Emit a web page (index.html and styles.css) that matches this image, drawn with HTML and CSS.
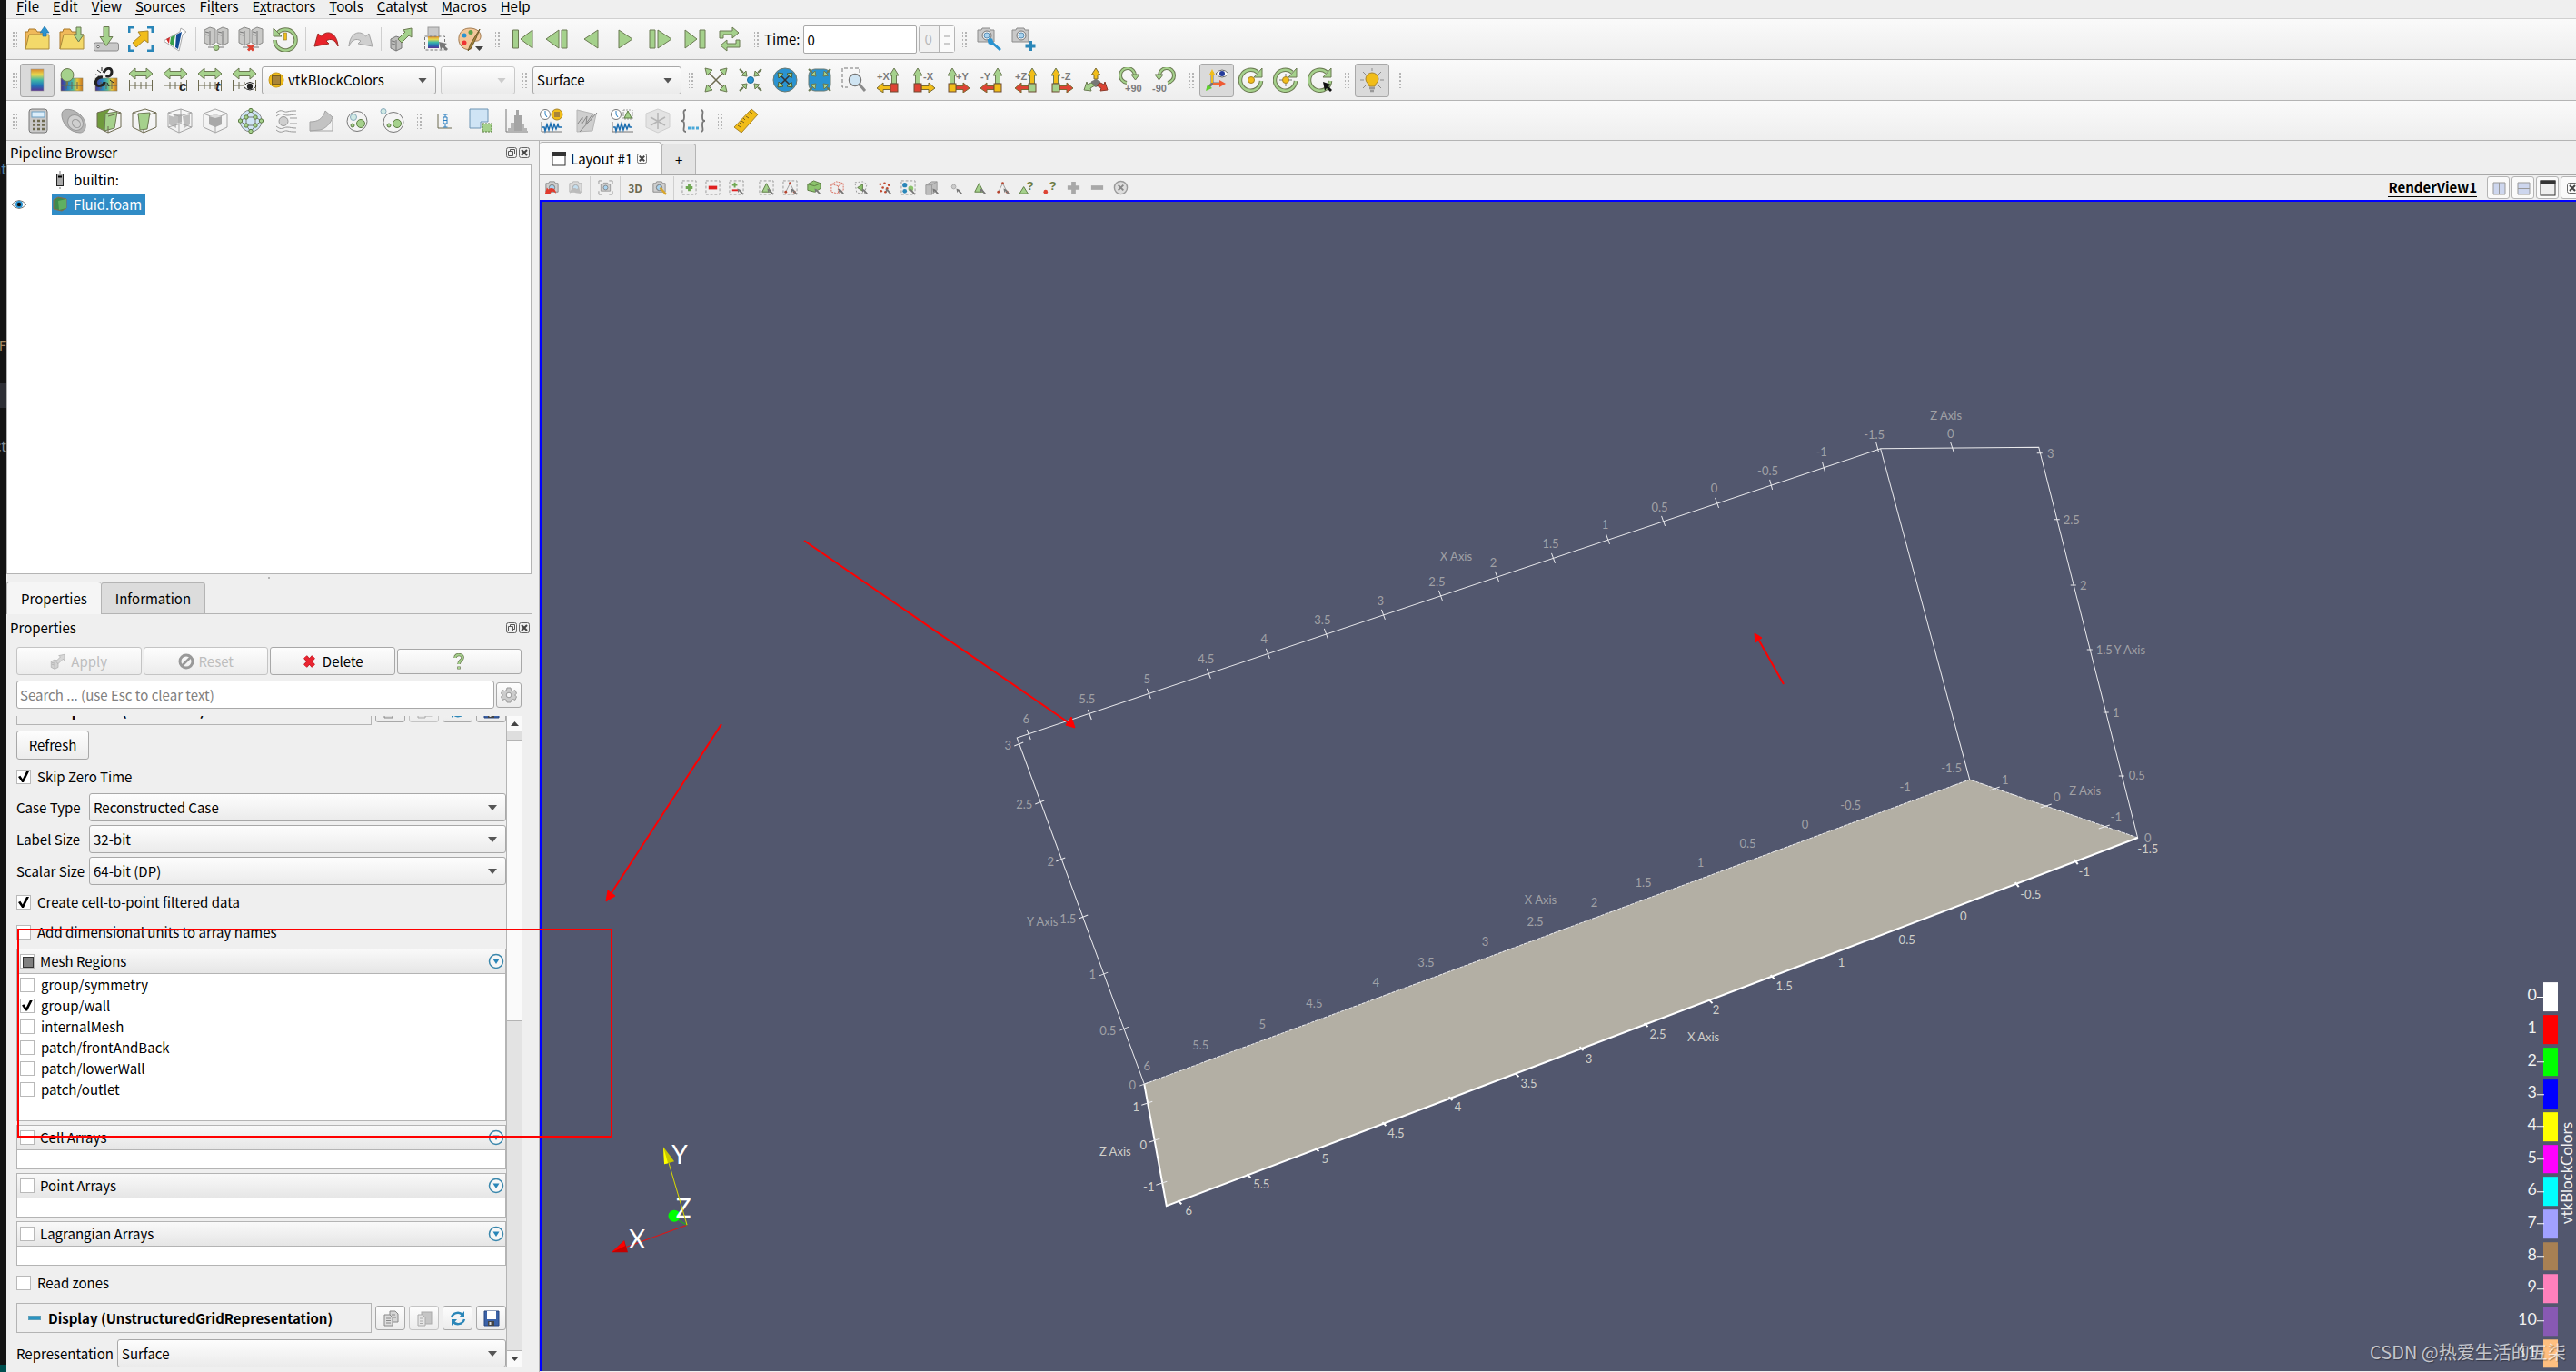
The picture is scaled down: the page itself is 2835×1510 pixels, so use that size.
FILE: index.html
```html
<!DOCTYPE html>
<html lang="en">
<head>
<meta charset="utf-8">
<title>ParaView</title>
<meta name="viewport" content="width=device-width, initial-scale=1">
<link rel="stylesheet" href="styles.css">
</head>
<body>
<svg class="sprite" aria-hidden="true">
  <defs>
    <linearGradient id="vir" x1="0" y1="0" x2="0" y2="1"><stop offset="0" stop-color="#d9882c"/><stop offset=".25" stop-color="#e8d84f"/><stop offset=".5" stop-color="#3fb8a6"/><stop offset=".75" stop-color="#2173b8"/><stop offset="1" stop-color="#5b3192"/></linearGradient>
    <linearGradient id="virh" x1="0" y1="0" x2="1" y2="0"><stop offset="0" stop-color="#4a2d8f"/><stop offset=".3" stop-color="#2a7fc0"/><stop offset=".55" stop-color="#4db89c"/><stop offset=".75" stop-color="#e8c63c"/><stop offset="1" stop-color="#c8741e"/></linearGradient>
  </defs>
  <symbol id="folder" viewBox="0 0 28 28"><path d="M1 25V6h3l1-3h7l2 3h7v5" fill="#f0b95a" stroke="#a8782a"/><path d="M5 9h22v16H1z" fill="#f3d96a" stroke="#a8893a"/></symbol>
  <symbol id="open" viewBox="0 0 28 28"><use href="#folder"/><path d="M22 0l5 7h-3v4h-4V7h-3z" fill="#2a93d1" stroke="#1b6d9e" stroke-width=".6"/></symbol>
  <symbol id="openin" viewBox="0 0 28 28"><use href="#folder"/><path d="M19 1h5v8h3l-5.500 8L16 9h3z" fill="#a5d18c" stroke="#6b7a52"/></symbol>
  <symbol id="save" viewBox="0 0 28 28"><rect x=".5" y="18" width="27" height="9" rx="2" fill="#c9c9c9" stroke="#8b8b8b"/><circle cx="5" cy="22.500" r="1.300" fill="#fff" stroke="#666"/><path d="M11 .5h6v11h4l-7 10-7-10h4z" fill="#a5d18c" stroke="#6b7a52"/></symbol>
  <symbol id="extent" viewBox="0 0 28 28"><path d="M1 7V1h6M21 1h6v6M27 21v6h-6M7 27H1v-6" fill="none" stroke="#2a86b8" stroke-width="3"/><path d="M22 5v13l-4-3-9 8-4-5 9-8-3-4z" fill="#f1bd19" stroke="#a8842a"/></symbol>
  <symbol id="flask" viewBox="0 0 28 28"><path d="M20 2l6 4-4 3-4 18L1 16 19 6z" fill="#fff" stroke="#a9a9a9"/><path d="M4 14l4-2-1 7z" fill="#d12a2a"/><path d="M9 12l5-3-2 13-4-3z" fill="#3aa04a"/><path d="M15 9l6-3-4 19-3-2z" fill="#104a94"/></symbol>
  <symbol id="servers" viewBox="0 0 28 28"><g fill="#c9c9c7" stroke="#8a8a88"><path d="M1 4l6-3 6 2v15l-6 3-6-3z"/><path d="M15 4l6-3 6 2v15l-6 3-6-3z"/></g><path d="M2 6l4 1M2 9l4 1M16 6l4 1M16 9l4 1M7 5v15M21 5v15M5 23h18" stroke="#777" fill="none"/></symbol>
  <symbol id="connect" viewBox="0 0 28 28"><use href="#servers"/><circle cx="14" cy="23.500" r="3" fill="#a5d18c" stroke="#6b7a52"/></symbol>
  <symbol id="disconnect" viewBox="0 0 28 28"><use href="#servers"/><path d="M11 20.500l6 6M17 20.500l-6 6" stroke="#dd4333" stroke-width="3"/></symbol>
  <symbol id="clock" viewBox="0 0 28 28"><path d="M4.500 8.500A11.500 11.500 0 1 1 2.500 15" fill="none" stroke="#6b7a52" stroke-width="4.500"/><path d="M4.500 8.500A11.500 11.500 0 1 1 2.500 15" fill="none" stroke="#a5d18c" stroke-width="2.500"/><path d="M1 2v9h9z" fill="#a5d18c" stroke="#6b7a52"/><rect x="12.500" y="7" width="3" height="8" fill="#f1bd19" stroke="#8a7a2a" stroke-width=".6"/></symbol>
  <symbol id="undo" viewBox="0 0 28 28"><path d="M1 22l4-14 3.500 3C15 3 26 7 27 22c-3-8-9-9-13-6l3 3z" fill="#e8222a" stroke="#9c2a24"/></symbol>
  <symbol id="redo" viewBox="0 0 28 28"><path d="M27 22L23 8l-3.500 3C13 3 2 7 1 22c3-8 9-9 13-6l-3 3z" fill="#cfcfcf" stroke="#a5a5a5"/></symbol>
  <symbol id="apply" viewBox="0 0 28 28"><path d="M2 14l6-3 6 2v11l-6 3-6-3z" fill="#bdbdbb" stroke="#777"/><path d="M8 15v12M3 16l4 1M3 19l4 1" stroke="#777"/><path d="M25 2v10l-3-2-8 8-4-4 8-8-3-2z" fill="#a5d18c" stroke="#6b7a52"/></symbol>
  <symbol id="cmapsel" viewBox="0 0 28 28"><rect x="5" y="1" width="12" height="11" fill="#c9c9c9" stroke="#999"/><rect x="5" y="11" width="12" height="13" fill="url(#vir)"/><rect x="1.500" y="11" width="22" height="15" fill="none" stroke="#777" stroke-dasharray="3 2"/><path d="M17 17l9 2-3 2 4 4-2 2-4-4-2 3z" fill="#777"/></symbol>
  <symbol id="palette" viewBox="0 0 28 28"><path d="M13 2C4 2 0 9 1 16s8 11 13 9c4-2-1-5 2-8 3-2 8 1 9-5C26 6 20 2 13 2z" fill="#f2c79a" stroke="#a47d52"/><circle cx="7" cy="10" r="2.500" fill="#2a93d1"/><circle cx="14" cy="6.500" r="2.500" fill="#5aa04a"/><circle cx="7" cy="18" r="2.500" fill="#e33"/><path d="M24 3l-4 10-5 10-4 4 3-8 5-8z" fill="#a8843a" stroke="#6b5a2a"/></symbol>
  <symbol id="caret" viewBox="0 0 28 28"><path d="M19 22h9l-4.500 5z" fill="#444"/></symbol>
  <symbol id="first" viewBox="0 0 28 28"><path d="M3.500 4h6v20h-6zM25 4v20L12 14z" fill="#a5d18c" stroke="#6b7a52"/></symbol>
  <symbol id="prev" viewBox="0 0 28 28"><path d="M19 4h6v20h-6zM16 4v20L2 14z" fill="#a5d18c" stroke="#6b7a52"/></symbol>
  <symbol id="back" viewBox="0 0 28 28"><path d="M21 4v20L6 14z" fill="#a5d18c" stroke="#6b7a52"/></symbol>
  <symbol id="play" viewBox="0 0 28 28"><path d="M6 4v20l15-10z" fill="#a5d18c" stroke="#6b7a52"/></symbol>
  <symbol id="next" viewBox="0 0 28 28"><path d="M2 4h6v20H2zM11 4v20l15-10z" fill="#a5d18c" stroke="#6b7a52"/></symbol>
  <symbol id="last" viewBox="0 0 28 28"><path d="M19 4h6v20h-6zM3 4v20l13-10z" fill="#a5d18c" stroke="#6b7a52"/></symbol>
  <symbol id="loop" viewBox="0 0 28 28"><path d="M3 13V5h14V1l7 6-7 6V9H7v4zM25 15v8H11v4l-7-6 7-6v4h10v-4z" fill="#a5d18c" stroke="#6b7a52"/></symbol>
  <symbol id="cam" viewBox="0 0 28 28"><path d="M1 4h4l1-2h8l1 2h4v13H1z" fill="#c9c9c9" stroke="#8b8b8b"/><circle cx="11" cy="10" r="5" fill="#eee" stroke="#777"/><circle cx="11" cy="10" r="3" fill="#a9d3ef" stroke="#5b8fb5"/></symbol>
  <symbol id="camwrench" viewBox="0 0 28 28"><use href="#cam"/><path d="M13 14l3 1 1 3 9 8M13 14l1 4 4 1" stroke="#2a93d1" stroke-width="3" fill="none"/></symbol>
  <symbol id="camplus" viewBox="0 0 28 28"><use href="#cam"/><path d="M21 16v11M15.500 21.500h11" stroke="#2a86b8" stroke-width="4" fill="none"/></symbol>
  <symbol id="colorbar" viewBox="0 0 28 28"><rect x="7" y="2" width="14" height="24" fill="url(#vir)" stroke="#999" stroke-width=".6"/></symbol>
  <symbol id="mapbar" viewBox="0 0 28 28"><rect x="2" y="12" width="24" height="14" fill="url(#virh)" stroke="#886" stroke-width=".6"/><path d="M2 20h24M8 16v8M14 16v8M20 16v8" stroke="#665" fill="none"/></symbol>
  <symbol id="editmap" viewBox="0 0 28 28"><use href="#mapbar"/><path d="M9 16v4" stroke="#6b7a52" stroke-width="2"/><circle cx="9" cy="8.500" r="7" fill="#a5d18c" stroke="#6b7a52"/></symbol>
  <symbol id="sepmap" viewBox="0 0 28 28"><use href="#mapbar"/><path d="M11 6c3-6 9-6 9-1s-5 6-6 4M10 11c-6-1-9 5-7 8s9 1 9-3" fill="none" stroke="#222" stroke-width="3"/><path d="M2 8l4 1M4 3l4 3M9 0v4M18 14l4 3M15 17l2 4" stroke="#222"/></symbol>
  <symbol id="resc" viewBox="0 0 28 28"><path d="M1 7l7-6v3.500h12V1l7 6-7 6V9.500H8V13z" fill="#a5d18c" stroke="#6b7a52"/><path d="M1 20h26M1.500 14v12M8 16v8M14 16v8M20 16v8M26.500 14v12" stroke="#6d6a50" fill="none"/></symbol>
  <symbol id="eyes" viewBox="0 0 18 12"><path d="M1 6q8-9 16 0-8 9-16 0z" fill="#fff" stroke="#777"/><circle cx="9" cy="6" r="4" fill="#2a93d1"/><circle cx="9" cy="6" r="2.200" fill="#111"/></symbol>
  <symbol id="resv" viewBox="0 0 28 28"><use href="#resc"/><path d="M13 21q7-9 14 0-7 8-14 0z" fill="#fff" stroke="#222"/><circle cx="20" cy="21" r="3.200" fill="#222"/></symbol>
  <symbol id="fit" viewBox="0 0 28 28"><path d="M4 4l20 20M24 4L4 24" stroke="#6d6a50" stroke-width="1.500"/><path d="M2 1l8 2-6 6zM26 1l-8 2 6 6zM2 27l8-2-6-6zM26 27l-8-2 6-6z" fill="#a5d18c" stroke="#6b7a52"/></symbol>
  <symbol id="tips" viewBox="0 0 28 28"><path d="M10 10L4 9l5-5zM18 10l6-1-5-5zM10 18l-6 1 5 5zM18 18l6 1-5 5z" fill="#a5d18c" stroke="#6b7a52"/><path d="M6 6L2 2M22 6l4-4M6 22l-4 4M22 22l4 4" stroke="#6b7a52" stroke-width="2"/></symbol>
  <symbol id="zoomd" viewBox="0 0 28 28"><use href="#tips"/><circle cx="14" cy="14" r="3.500" fill="#2a93d1" stroke="#1b6d9e"/></symbol>
  <symbol id="zball" viewBox="0 0 28 28"><circle cx="14" cy="14" r="13" fill="#2a93d1" stroke="#6b7a72"/><path d="M8 8l12 12M20 8L8 20" stroke="#333" stroke-width="1.500"/><path d="M6 6l6 1-5 5zM22 6l-6 1 5 5zM6 22l6-1-5-5zM22 22l-6-1 5-5z" fill="#a5d18c" stroke="#4b5a32"/></symbol>
  <symbol id="zbox" viewBox="0 0 28 28"><rect x="2" y="2" width="24" height="24" rx="7" fill="#2a93d1" stroke="#6b7a72"/><use href="#tips"/></symbol>
  <symbol id="zrub" viewBox="0 0 28 28"><path d="M20 6V1H1v21h6" fill="none" stroke="#777" stroke-dasharray="4 2"/><path d="M20 19l6 7" stroke="#8b8b8b" stroke-width="3"/><circle cx="15" cy="14" r="6.500" fill="#cfe4f2" stroke="#777" stroke-width="1.500"/></symbol>
  <symbol id="axr" viewBox="0 0 28 28"><path d="M17.500 18V9H15l5-8 5 8h-2.500v9z" fill="var(--v,#a5d18c)" stroke="#6b7a52"/><path d="M16 20.500H8V17l-7 6 7 5v-3.500h8z" fill="var(--h,#f1bd19)" stroke="#7a6a32"/><rect x="16" y="18" width="8" height="9" fill="var(--c,#dd4333)" stroke="#6d4a32"/></symbol>
  <symbol id="axl" viewBox="0 0 28 28"><path d="M5.500 18V9H3l5-8 5 8h-2.500v9z" fill="var(--v,#a5d18c)" stroke="#6b7a52"/><path d="M12 20.500h8V17l7 6-7 5v-3.500h-8z" fill="var(--h,#f1bd19)" stroke="#7a6a32"/><rect x="4" y="18" width="8" height="9" fill="var(--c,#dd4333)" stroke="#6d4a32"/></symbol>
  <symbol id="iso" viewBox="0 0 28 28"><path d="M14 13l5 2.500v4L14 22l-5-2.500v-4z" fill="#777"/><path d="M12 13V8H9.500L14 1l4.500 7H16v5z" fill="#f1bd19" stroke="#7a6a32"/><path d="M9 17l-4 2-1-3-3 9 8 1-1-3 5-3z" fill="#a5d18c" stroke="#6b7a52"/><path d="M19 17l4 2 1-3 3 9-8 1 1-3-5-3z" fill="#dd4333" stroke="#8a3a2a"/></symbol>
  <symbol id="rotp" viewBox="0 0 28 28"><path d="M10 17A8 8 0 1 1 19 9" fill="none" stroke="#6b7a52" stroke-width="4"/><path d="M10 17A8 8 0 1 1 19 9" fill="none" stroke="#a5d18c" stroke-width="2"/><path d="M15 8h9l-4.500 6z" fill="#a5d18c" stroke="#6b7a52"/></symbol>
  <symbol id="rotm" viewBox="0 0 28 28"><path d="M17 17A8 8 0 1 0 8 9" fill="none" stroke="#6b7a52" stroke-width="4"/><path d="M17 17A8 8 0 1 0 8 9" fill="none" stroke="#a5d18c" stroke-width="2"/><path d="M3 8h9l-4.500 6z" fill="#a5d18c" stroke="#6b7a52"/></symbol>
  <symbol id="axes" viewBox="0 0 28 28"><path d="M9 5v13h10M9 18l-5 5" stroke="#777" stroke-width="3" fill="none"/><path d="M9 5v12" stroke="#f1bd19" stroke-width="2"/><path d="M10 18h9" stroke="#ef6a33" stroke-width="2"/><path d="M6 8l3-6 3 6z" fill="#f1bd19"/><path d="M17 14l7 4-7 4z" fill="#ef5a33"/><path d="M2 26l2-7 5 4z" fill="#5fd12f"/><path d="M13 7q7-8 14 0-7 8-14 0z" fill="#fff" stroke="#666"/><circle cx="20" cy="7" r="3" fill="#233a9a"/></symbol>
  <symbol id="ring" viewBox="0 0 28 28"><path d="M25 15A11.500 11.500 0 1 1 21 5.500" fill="none" stroke="#6b7a52" stroke-width="4.500"/><path d="M25 15A11.500 11.500 0 1 1 21 5.500" fill="none" stroke="#a5d18c" stroke-width="2.500"/><path d="M26 1v10h-9z" fill="#a5d18c" stroke="#6b7a52"/></symbol>
  <symbol id="ring1" viewBox="0 0 28 28"><use href="#ring"/><circle cx="14" cy="14" r="3.500" fill="#f1bd19" stroke="#a8842a"/></symbol>
  <symbol id="ring2" viewBox="0 0 28 28"><path d="M14 7v14M7 14h14" stroke="#777"/><use href="#ring1"/></symbol>
  <symbol id="ring3" viewBox="0 0 28 28"><use href="#ring"/><path d="M17 16l9 3-3 2 4 4-2 2-4-4-2 3z" fill="#111"/></symbol>
  <symbol id="bulb" viewBox="0 0 28 28"><path d="M14 1v3M1 14h4M23 14h4M4 5l3 3M24 5l-3 3M4 23l3-3M24 23l-3-3" stroke="#8b8b8b"/><path d="M11 21c0-3-4-4-4-8a7 7 0 0 1 14 0c0 4-4 5-4 8z" fill="#f1bd19" stroke="#a8842a"/><path d="M11 23h6M12 26h4" stroke="#999" stroke-width="2.500"/></symbol>
  <symbol id="calc" viewBox="0 0 28 28"><rect x="4" y="1" width="20" height="26" rx="3" fill="#c9c9c9" stroke="#777"/><rect x="7" y="4" width="14" height="6" fill="#dceefa" stroke="#6ca0c4"/><path d="M8 14h3M13 14h3M18 14h3M8 18.500h3M13 18.500h3M18 18.500h3M8 23h3M13 23h3M18 23h3" stroke="#6d6a50" stroke-width="2.500"/></symbol>
  <symbol id="contour" viewBox="0 0 28 28"><path d="M1 6C2-1 14 0 22 8s6 19-1 19C10 27 0 16 1 6z" fill="#b5b5b5" stroke="#999"/><ellipse cx="16" cy="16" rx="9" ry="8" transform="rotate(45 16 16)" fill="#cfcfcf" stroke="#999"/><ellipse cx="17" cy="17" rx="5" ry="4" transform="rotate(45 17 17)" fill="none" stroke="#999"/></symbol>
  <symbol id="wire" viewBox="0 0 28 28"><path d="M1 5l14-4 12 4v16l-14 6-12-6zM1 5l12 4 14-4M13 9v18M15 1v16l12 4M15 17L1 21" fill="none" stroke="var(--w,#6d6a50)"/></symbol>
  <symbol id="clip" viewBox="0 0 28 28"><path d="M1 5l14-4-4 6-1 18-9-4z" fill="#6f9a3c"/><path d="M10 6l13-2-3 18-11 3z" fill="#a5d18c" stroke="#6b7a52"/><path d="M1 5l14-4 12 4v16l-14 6-12-6z" fill="none" stroke="#6d6a50"/><path d="M13 9l14-4M13 20v7" fill="none" stroke="#6d6a50"/></symbol>
  <symbol id="slice" viewBox="0 0 28 28"><path d="M1 5l14-4 12 4v16l-14 6-12-6zM1 5l12 4 14-4M13 9v18" fill="none" stroke="#6d6a50"/><path d="M7 6l13-1-3 18-8 1z" fill="#a5d18c" stroke="#6b7a52"/></symbol>
  <symbol id="thresh" viewBox="0 0 28 28" style="--w:#a5a5a5"><path d="M2 8l6 2 0-4 8 1v8l-6 2v5l-8-4zM17 9l8-2v11l-6 4z" fill="#bdbdbd"/><use href="#wire"/></symbol>
  <symbol id="subset" viewBox="0 0 28 28"><path d="M1 6l13-5 13 5v15l-13 6-13-6zM1 6l13 5 13-5M14 19v8" fill="none" stroke="#a5a5a5"/><path d="M7 9l7-2 7 2v9l-7 3-7-3z" fill="#a8a8a8"/><path d="M7 9l7 2 7-2-7-2z" fill="#ddd"/></symbol>
  <symbol id="glyph" viewBox="0 0 28 28"><circle cx="14" cy="14" r="12" fill="#cfe4f5" stroke="#888"/><path d="M2 14l7-4h10l7 4-7 5H9zM9 10l5-8 5 8M9 19l5 7 5-7M9 10v9M19 10v9" fill="none" stroke="#777"/><g fill="#a5d18c" stroke="#5b7a42"><circle cx="14" cy="2.500" r="2.200"/><circle cx="14" cy="25.500" r="2.200"/><circle cx="2.500" cy="14" r="2.200"/><circle cx="25.500" cy="14" r="2.200"/><circle cx="9" cy="10" r="2.200"/><circle cx="19" cy="10" r="2.200"/><circle cx="9" cy="19" r="2.200"/><circle cx="19" cy="19" r="2.200"/></g></symbol>
  <symbol id="stream" viewBox="0 0 28 28"><path d="M3 5c6-5 8 0 12-1s5-1 10-1M3 9c6-5 8-1 12-1s5-1 10-1M3 20c6 5 8 1 12 1s5 1 10 1M3 24c6 5 8 0 12 1s5 1 10 1M18 11l8 0M18 17h8" fill="none" stroke="#999"/><circle cx="11" cy="14.500" r="5" fill="#cfcfcf" stroke="#999"/></symbol>
  <symbol id="warp" viewBox="0 0 28 28"><path d="M1 15c9 0 14-3 17-12l8 7c-2 7-8 13-14 14l-11 1z" fill="#c3c3c3" stroke="#a5a5a5"/><path d="M1 25h25V13" fill="none" stroke="#a5a5a5"/></symbol>
  <symbol id="group" viewBox="0 0 28 28"><circle cx="14" cy="14.500" r="11" fill="#f4f4f4" stroke="#777"/><circle cx="10" cy="10" r="3.500" fill="#cfe9e4" stroke="#8ab"/><circle cx="9" cy="19" r="2" fill="#a5d18c" stroke="#5b7a42"/><circle cx="18" cy="17" r="4.500" fill="#a5d18c" stroke="#5b7a42"/></symbol>
  <symbol id="extractb" viewBox="0 0 28 28"><circle cx="15" cy="15.500" r="11" fill="#f4f4f4" stroke="#777"/><circle cx="4" cy="3.500" r="3" fill="#cfe9e4" stroke="#8ab"/><circle cx="10" cy="19" r="2" fill="#a5d18c" stroke="#5b7a42"/><circle cx="19" cy="17" r="4.500" fill="#a5d18c" stroke="#5b7a42"/></symbol>
  <symbol id="box" viewBox="0 0 28 28"><path d="M6 6v16h15" fill="none" stroke="#6d6a50"/><path d="M14 7v3M14 17v4M11.500 7h5M11.500 21h5" stroke="#2a7fc0"/><path d="M12 10h4v7h-4zM12 13.500h4" fill="none" stroke="#2a7fc0"/></symbol>
  <symbol id="selx" viewBox="0 0 28 28"><path d="M2 1h20v14h-8v7H2z" fill="#cfe4f5" stroke="#6c94b4"/><rect x="16" y="17" width="10" height="9" fill="#a5d18c" stroke="#5b7a42" stroke-dasharray="2 1"/></symbol>
  <symbol id="hist" viewBox="0 0 28 28"><path d="M3 1v25h24" fill="none" stroke="#777"/><path d="M5 25v-3h3v3zM8 25v-9h4v9zM20 25v-8h3v8zM23 25v-3h3v3z" fill="#b5b5b5"/><path d="M12 25V8h2V2h3v6h3v17z" fill="#a5a5a5"/></symbol>
  <symbol id="wave" viewBox="0 0 28 28"><path d="M3 15v11h23" fill="none" stroke="#777"/><path d="M4 21h2l1 4 2-7 2 6 2-7 2 7 2-6 2 5 2-5 1 3h3" fill="none" stroke="#1b6db0" stroke-width="1.500"/><circle cx="7" cy="7" r="5.500" fill="#fff" stroke="#777"/><path d="M7 3v4l2 3" fill="none" stroke="#2a7fc0"/></symbol>
  <symbol id="plottime" viewBox="0 0 28 28"><use href="#wave"/><circle cx="20" cy="7" r="6" fill="#f1bd19" stroke="#a8842a"/><rect x="17" y="4" width="6" height="6" fill="#a8843a"/></symbol>
  <symbol id="plotsel" viewBox="0 0 28 28"><use href="#wave"/><rect x="15" y="2" width="10" height="10" fill="none" stroke="#999" stroke-dasharray="2 1"/><path d="M20 3l4 8h-8z" fill="#a5d18c" stroke="#5b7a42"/></symbol>
  <symbol id="plotline" viewBox="0 0 28 28"><path d="M3 2l21 5-4 18-17 1z" fill="#cfcfcf" stroke="#b5b5b5"/><path d="M6 26L25 5M4 17l5-7-1 8 6-9-1 8 7-10-1 7" fill="none" stroke="#888"/></symbol>
  <symbol id="probe" viewBox="0 0 28 28"><path d="M1 6l13-5 13 5v15l-13 6-13-6z" fill="#e3e3e3" stroke="#cfcfcf"/><path d="M14 5v18M6 10l16 9M22 10L6 19" stroke="#b5b5b5" stroke-width="1.500"/></symbol>
  <symbol id="braces" viewBox="0 0 28 28"><path d="M6 2C2 2 4 6 4 9s0 5-3 5c3 0 3 2 3 5s-2 7 2 7M22 2c4 0 2 4 2 7s0 5 3 5c-3 0-3 2-3 5s2 7-2 7" fill="none" stroke="#777" stroke-width="1.800"/><path d="M8 22h3M12.500 22h3M17 22h3" stroke="#4aa8d8" stroke-width="3"/></symbol>
  <symbol id="ruler" viewBox="0 0 28 28"><path d="M20 1l7 6L9 27l-8-6z" fill="#f1bd19" stroke="#a8842a"/><path d="M18 4l3 2M16 6l2 1M14 9l3 2M11 11l2 2M9 14l3 2M7 16l2 2M5 19l3 2" stroke="#7a5f1a"/></symbol>
  <symbol id="dashb" viewBox="0 0 18 18"><rect x="1" y="1" width="16" height="16" fill="none" stroke="#999" stroke-dasharray="3 2"/></symbol>
  <symbol id="cur" viewBox="0 0 18 18"><path d="M10 10l3 1 4 5-1.500 1L12 13l-1 2z" fill="#777"/></symbol>
  <symbol id="tri" viewBox="0 0 18 18"><path d="M9 4l5 10H4z" fill="#a5d18c" stroke="#5b7a42"/></symbol>
  <symbol id="tripts" viewBox="0 0 18 18"><path d="M9 4l5 10M9 4L4 14" fill="none" stroke="#999"/><g fill="#b5452f"><circle cx="9" cy="4" r="1.500"/><circle cx="14" cy="14" r="1.500"/><circle cx="4" cy="14" r="1.500"/></g></symbol>
  <symbol id="minicam" viewBox="0 0 18 18"><path d="M2 4h3l1-2h6l1 2h3v10H2z" fill="#cfcfcf" stroke="#8b8b8b"/><circle cx="9" cy="9" r="3.300" fill="#a9d3ef" stroke="#777"/></symbol>
  <symbol id="dockfloat" viewBox="0 0 12 12"><rect x=".5" y=".5" width="11" height="11" rx="2" fill="none" stroke="#666"/><path d="M4.500 4.500v-2h5v5h-2M2.500 4.500h5v5h-5z" fill="none" stroke="#555"/></symbol>
  <symbol id="dockclose" viewBox="0 0 12 12"><rect x=".5" y=".5" width="11" height="11" rx="2" fill="none" stroke="#666"/><path d="M3 3l6 6M9 3L3 9" stroke="#444" stroke-width="2"/></symbol>
  <symbol id="collapse" viewBox="0 0 18 18"><circle cx="9" cy="9" r="7.500" fill="#f7f7f7" stroke="#3a87ac" stroke-width="1.500"/><path d="M5.500 6.500h7L9 12z" fill="#2a86b8"/></symbol>
  <symbol id="copy" viewBox="0 0 18 18"><path d="M8 1h6l3 3v9H8z" fill="#d5d5d5" stroke="#888"/><path d="M2 5h6l3 3v9H2z" fill="#ddd" stroke="#888"/><path d="M4 9h5M4 11.500h5M4 14h5M10 5h4M12 8h3" stroke="#888"/></symbol>
  <symbol id="paste" viewBox="0 0 18 18"><rect x="6" y="2" width="11" height="13" fill="#c5c5c5" stroke="#aaa"/><path d="M2 5h5l3 3v9H2z" fill="#e5e5e5" stroke="#aaa"/><path d="M4 9h4M4 12h4M4 14.500h4" stroke="#aaa"/></symbol>
  <symbol id="reload" viewBox="0 0 18 18"><path d="M2 8a7 6.500 0 0 1 12-3M16 10a7 6.500 0 0 1-12 3" fill="none" stroke="#2a86b8" stroke-width="2.500"/><path d="M16 1v7h-6zM2 17v-7h6z" fill="#2a86b8"/></symbol>
  <symbol id="floppy" viewBox="0 0 18 18"><path d="M1 1h16v16H1z" fill="#3b62a8" stroke="#26457f"/><path d="M4 1h10v9H4z" fill="#fff"/><path d="M5 12h7v5H5z" fill="#444"/><path d="M6.500 13h2v3h-2z" fill="#ddd"/></symbol>
</svg>

<div class="app">
  <aside class="strip" aria-hidden="true"><span class="s1">nt</span><span class="s2">SF</span><span class="s3"></span><span class="s4">ct</span><span class="s5"></span></aside>
  <div class="window">
    <nav class="menubar"><a href="#"><u>F</u>ile</a><a href="#"><u>E</u>dit</a><a href="#"><u>V</u>iew</a><a href="#"><u>S</u>ources</a><a href="#">Fi<u>l</u>ters</a><a href="#">E<u>x</u>tractors</a><a href="#"><u>T</u>ools</a><a href="#"><u>C</u>atalyst</a><a href="#"><u>M</u>acros</a><a href="#"><u>H</u>elp</a></nav>

    <div class="toolbar">
      <i class="grip"></i>
      <button class="tb" aria-label="Open"><svg><use href="#open"/></svg></button><button class="tb" aria-label="Load state"><svg><use href="#openin"/></svg></button><button class="tb" aria-label="Save"><svg><use href="#save"/></svg></button><button class="tb" aria-label="Save extracts"><svg><use href="#extent"/></svg></button><button class="tb" aria-label="Catalyst"><svg><use href="#flask"/></svg></button>
      <i class="sep"></i>
      <button class="tb" aria-label="Connect"><svg><use href="#connect"/></svg></button><button class="tb" aria-label="Disconnect"><svg><use href="#disconnect"/></svg></button><button class="tb" aria-label="Reload"><svg><use href="#clock"/></svg></button>
      <i class="sep"></i>
      <button class="tb" aria-label="Undo"><svg><use href="#undo"/></svg></button><button class="tb" aria-label="Redo"><svg><use href="#redo"/></svg></button>
      <i class="sep"></i>
      <button class="tb" aria-label="Auto apply"><svg><use href="#apply"/></svg></button><button class="tb" aria-label="Find data"><svg><use href="#cmapsel"/></svg></button><button class="tb" aria-label="Palette"><svg><use href="#palette"/><use href="#caret"/></svg></button>
      <i class="grip"></i>
      <button class="tb" aria-label="First frame"><svg><use href="#first"/></svg></button><button class="tb" aria-label="Previous frame"><svg><use href="#prev"/></svg></button><button class="tb" aria-label="Reverse"><svg><use href="#back"/></svg></button><button class="tb" aria-label="Play"><svg><use href="#play"/></svg></button><button class="tb" aria-label="Next frame"><svg><use href="#next"/></svg></button><button class="tb" aria-label="Last frame"><svg><use href="#last"/></svg></button><button class="tb" aria-label="Loop"><svg><use href="#loop"/></svg></button>
      <i class="grip"></i>
      <label class="timelabel" for="time">Time:</label><input id="time" class="timebox" value="0">
      <span class="spin"><input aria-label="Time step" value="0" disabled><span class="arrows"></span></span>
      <i class="grip"></i>
      <button class="tb" aria-label="Adjust camera"><svg><use href="#camwrench"/></svg></button><button class="tb" aria-label="Add camera link"><svg><use href="#camplus"/></svg></button>
    </div>

    <div class="toolbar">
      <i class="grip"></i>
      <button class="tb on" aria-label="Color legend"><svg><use href="#colorbar"/></svg></button><button class="tb" aria-label="Edit color map"><svg><use href="#editmap"/></svg></button><button class="tb" aria-label="Separate color map"><svg><use href="#sepmap"/></svg></button><button class="tb" aria-label="Rescale"><svg><use href="#resc"/></svg></button><button class="tb" aria-label="Rescale custom"><svg viewBox="0 0 28 28"><use href="#resc"/><text class="ital" x="18" y="26">c</text></svg></button><button class="tb" aria-label="Rescale temporal"><svg viewBox="0 0 28 28"><use href="#resc"/><text class="ital" x="20" y="26">t</text></svg></button><button class="tb" aria-label="Rescale visible"><svg><use href="#resv"/></svg></button>
      <span class="combo array"><svg class="cell" viewBox="0 0 18 18"><circle cx="9" cy="9" r="8" fill="#f1bd19" stroke="#c99a18"/><rect x="4.500" y="4.500" width="9" height="9" fill="#a8843a" stroke="#7a5f1a"/></svg><select aria-label="Coloring"><option>vtkBlockColors</option></select></span>
      <span class="combo comp"><select aria-label="Component" disabled><option></option></select></span>
      <i class="grip"></i>
      <span class="combo repr"><select aria-label="Representation type"><option>Surface</option></select></span>
      <i class="grip"></i>
      <button class="tb" aria-label="Reset camera"><svg><use href="#fit"/></svg></button><button class="tb" aria-label="Zoom to data"><svg><use href="#zoomd"/></svg></button><button class="tb" aria-label="Reset closest"><svg><use href="#zball"/></svg></button><button class="tb" aria-label="Zoom closest"><svg><use href="#zbox"/></svg></button><button class="tb" aria-label="Zoom to box"><svg><use href="#zrub"/></svg></button>
      <button class="tb" aria-label="View +X"><svg viewBox="0 0 28 28"><use href="#axr"/><text class="ax" x="1" y="14">+X</text></svg></button><button class="tb" aria-label="View -X"><svg viewBox="0 0 28 28"><use href="#axl"/><text class="ax" x="14" y="14">-X</text></svg></button><button class="tb yv" aria-label="View +Y"><svg viewBox="0 0 28 28"><use href="#axl"/><text class="ax" x="12" y="14">+Y</text></svg></button><button class="tb yv" aria-label="View -Y"><svg viewBox="0 0 28 28"><use href="#axr"/><text class="ax" x="1" y="14">-Y</text></svg></button><button class="tb zv" aria-label="View +Z"><svg viewBox="0 0 28 28"><use href="#axr"/><text class="ax" x="1" y="14">+Z</text></svg></button><button class="tb zv" aria-label="View -Z"><svg viewBox="0 0 28 28"><use href="#axl"/><text class="ax" x="14" y="14">-Z</text></svg></button><button class="tb" aria-label="Isometric"><svg><use href="#iso"/></svg></button><button class="tb" aria-label="Rotate +90"><svg viewBox="0 0 28 28"><use href="#rotp"/><text class="ax" x="8" y="27">+90</text></svg></button><button class="tb" aria-label="Rotate -90"><svg viewBox="0 0 28 28"><use href="#rotm"/><text class="ax" x="0" y="27">-90</text></svg></button>
      <i class="grip"></i>
      <button class="tb on" aria-label="Show center axes"><svg><use href="#axes"/></svg></button><button class="tb" aria-label="Reset center"><svg><use href="#ring1"/></svg></button><button class="tb" aria-label="Center on data"><svg><use href="#ring2"/></svg></button><button class="tb" aria-label="Pick center"><svg><use href="#ring3"/></svg></button>
      <i class="grip"></i>
      <button class="tb on" aria-label="Light"><svg><use href="#bulb"/></svg></button>
      <i class="grip"></i>
    </div>

    <div class="toolbar filters">
      <i class="grip"></i>
      <button class="tb" aria-label="Calculator"><svg><use href="#calc"/></svg></button><button class="tb" aria-label="Contour"><svg><use href="#contour"/></svg></button><button class="tb" aria-label="Clip"><svg><use href="#clip"/></svg></button><button class="tb" aria-label="Slice"><svg><use href="#slice"/></svg></button><button class="tb" aria-label="Threshold"><svg><use href="#thresh"/></svg></button><button class="tb" aria-label="Extract subset"><svg><use href="#subset"/></svg></button><button class="tb" aria-label="Glyph"><svg><use href="#glyph"/></svg></button><button class="tb" aria-label="Stream tracer"><svg><use href="#stream"/></svg></button><button class="tb" aria-label="Warp"><svg><use href="#warp"/></svg></button><button class="tb" aria-label="Group"><svg><use href="#group"/></svg></button><button class="tb" aria-label="Extract block"><svg><use href="#extractb"/></svg></button>
      <i class="grip"></i>
      <button class="tb" aria-label="Box chart"><svg><use href="#box"/></svg></button><button class="tb" aria-label="Extract selection"><svg><use href="#selx"/></svg></button><button class="tb" aria-label="Histogram"><svg><use href="#hist"/></svg></button><button class="tb" aria-label="Plot over time"><svg><use href="#plottime"/></svg></button><button class="tb" aria-label="Plot over line"><svg><use href="#plotline"/></svg></button><button class="tb" aria-label="Plot selection"><svg><use href="#plotsel"/></svg></button><button class="tb" aria-label="Probe"><svg><use href="#probe"/></svg></button><button class="tb" aria-label="Programmable filter"><svg><use href="#braces"/></svg></button>
      <i class="grip"></i>
      <button class="tb" aria-label="Ruler"><svg><use href="#ruler"/></svg></button>
    </div>

    <div class="main">
      <div class="dock">
        <header class="docktitle"><span>Pipeline Browser</span><button aria-label="Float"><svg><use href="#dockfloat"/></svg></button><button aria-label="Close"><svg><use href="#dockclose"/></svg></button></header>
        <ul class="tree">
          <li><span class="eye"></span><span class="item"><svg class="srv" viewBox="0 0 18 20"><path d="M9 0v3M9 18v2" stroke="#777"/><rect x="5.500" y="3.500" width="7" height="13" fill="#aaa" stroke="#222"/><path d="M7 6.500h4" stroke="#000" stroke-width="2"/></svg>builtin:</span></li>
          <li><svg class="eye"><use href="#eyes"/></svg><span class="item sel"><svg viewBox="0 0 18 20"><path d="M2 5l5-3 9 2v10l-5 3-9-2z" fill="#3f8a4c" stroke="#8a6a4a"/><path d="M7 6l9-2v10l-8 2z" fill="#5fb060"/></svg>Fluid.foam</span></li>
        </ul>
        <div class="split"></div>
        <div class="tabs"><button class="tab active">Properties</button><button class="tab">Information</button></div>
        <header class="docktitle props"><span>Properties</span><button aria-label="Float"><svg><use href="#dockfloat"/></svg></button><button aria-label="Close"><svg><use href="#dockclose"/></svg></button></header>
        <div class="actions">
          <button class="btn" disabled><svg class="grey"><use href="#apply"/></svg>Apply</button>
          <button class="btn" disabled><svg viewBox="0 0 18 18"><circle cx="9" cy="9" r="7" fill="none" stroke="#999" stroke-width="3"/><path d="M4 14L14 4" stroke="#999" stroke-width="2.500"/></svg>Reset</button>
          <button class="btn"><svg viewBox="0 0 18 18"><path d="M4 4l9 10M13 4L4 14" stroke="#b02028" stroke-width="5"/><path d="M4 4l9 10M13 4L4 14" stroke="#ea2430" stroke-width="4"/></svg>Delete</button>
          <button class="btn help" aria-label="Help"><svg viewBox="0 0 18 18"><path d="M5 5c0-5 9-4 8 0 0 3-4 3-4 7M9 14.500v3" fill="none" stroke="#6b7a52" stroke-width="3.500"/><path d="M5 5c0-5 9-4 8 0 0 3-4 3-4 7M9 15v2" fill="none" stroke="#a5d18c" stroke-width="2"/></svg></button>
        </div>
        <div class="search"><input type="text" aria-label="Search" placeholder="Search ... (use Esc to clear text)"><button class="btn" aria-label="Advanced"><svg viewBox="0 0 18 18"><path d="M7 1h4l.5 2.500 2 1L16 3.700l1.500 3.600L15.500 9l2 1.700L16 14.300l-2.500-.8-2 1L11 17H7l-.5-2.500-2-1-2.500.8-1.500-3.600L2.500 9l-2-1.700L2 3.700l2.500.8 2-1z" fill="#ccc" stroke="#999"/><circle cx="9" cy="9" r="2.800" fill="#f5f5f5" stroke="#999"/></svg></button></div>
        <div class="scroll">
          <div class="form">
            <div class="group clipped"><div class="gtitle"><b>Properties (Fluid.foam)</b></div><button class="btn" aria-label="Copy"><svg><use href="#copy"/></svg></button><button class="btn" disabled aria-label="Paste"><svg><use href="#paste"/></svg></button><button class="btn" aria-label="Restore"><svg><use href="#reload"/></svg></button><button class="btn" aria-label="Save defaults"><svg><use href="#floppy"/></svg></button></div>
            <button class="btn refresh">Refresh</button>
            <label class="check"><input type="checkbox" checked>Skip Zero Time</label>
            <div class="fields">
              <label for="ct">Case Type</label><span class="combo"><select id="ct"><option>Reconstructed Case</option></select></span>
              <label for="ls">Label Size</label><span class="combo"><select id="ls"><option>32-bit</option></select></span>
              <label for="ss">Scalar Size</label><span class="combo"><select id="ss"><option>64-bit (DP)</option></select></span>
            </div>
            <label class="check"><input type="checkbox" checked>Create cell-to-point filtered data</label>
            <label class="check second"><input type="checkbox">Add dimensional units to array names</label>
            <section class="list"><header><label><input type="checkbox" class="mixed">Mesh Regions</label><svg><use href="#collapse"/></svg></header>
              <div class="rows regions"><label><input type="checkbox">group/symmetry</label><label><input type="checkbox" checked>group/wall</label><label><input type="checkbox">internalMesh</label><label><input type="checkbox">patch/frontAndBack</label><label><input type="checkbox">patch/lowerWall</label><label><input type="checkbox">patch/outlet</label></div></section>
            <section class="list"><header><label><input type="checkbox">Cell Arrays</label><svg><use href="#collapse"/></svg></header><div class="rows"></div></section>
            <section class="list"><header><label><input type="checkbox">Point Arrays</label><svg><use href="#collapse"/></svg></header><div class="rows"></div></section>
            <section class="list"><header><label><input type="checkbox">Lagrangian Arrays</label><svg><use href="#collapse"/></svg></header><div class="rows"></div></section>
            <label class="check zones"><input type="checkbox">Read zones</label>
            <div class="group"><div class="gtitle"><i class="minus"></i><b>Display (UnstructuredGridRepresentation)</b></div><button class="btn" aria-label="Copy"><svg><use href="#copy"/></svg></button><button class="btn" disabled aria-label="Paste"><svg><use href="#paste"/></svg></button><button class="btn" aria-label="Restore"><svg><use href="#reload"/></svg></button><button class="btn" aria-label="Save defaults"><svg><use href="#floppy"/></svg></button></div>
            <div class="fields rep"><label for="rp">Representation</label><span class="combo"><select id="rp"><option>Surface</option></select></span></div>
          </div>
          <div class="bar"><i class="up"></i><i class="gap"></i><i class="thumb"></i><i class="trough"></i><i class="down"></i></div>
        </div>
      </div>

      <div class="right">
        <div class="ltabs"><button class="ltab active"><svg class="win" viewBox="0 0 16 16"><rect x="1" y="1" width="14" height="14" fill="#fff" stroke="#333"/><path d="M0 0h16v5H0z" fill="#333"/></svg>Layout #1<svg class="x"><use href="#dockclose"/></svg></button><button class="ltab">+</button></div>
        <div class="viewbar">
          <button class="vb" aria-label="Undo camera"><svg viewBox="0 0 18 18"><use href="#minicam"/><path d="M1 16l2-7 2 2c4-3 8-1 9 5-3-3-5-3-7-1l1 1z" fill="#e03a2c"/></svg></button><button class="vb faded" aria-label="Redo camera"><svg viewBox="0 0 18 18"><use href="#minicam"/><path d="M15 16l-2-7-2 2c-4-3-8-1-9 5 3-3 5-3 7-1z" fill="#999"/></svg></button><i class="sep"></i>
          <button class="vb" aria-label="Capture"><svg viewBox="0 0 18 18"><path d="M1 5V1h4M13 1h4v4M17 13v4h-4M5 17H1v-4" fill="none" stroke="#999"/><use href="#minicam" x="2" y="2" width="14" height="14"/></svg></button><i class="sep"></i>
          <button class="vb mode">3D</button><button class="vb" aria-label="Adjust camera"><svg viewBox="0 0 18 18"><use href="#minicam"/><path d="M10 9l7 8" stroke="#d8a52a" stroke-width="2.500"/></svg></button><i class="sep"></i>
          <button class="vb" aria-label="Add selection"><svg viewBox="0 0 18 18"><use href="#dashb"/><path d="M9 5v8M5 9h8" stroke="#6fa852" stroke-width="3"/></svg></button><button class="vb" aria-label="Subtract selection"><svg viewBox="0 0 18 18"><use href="#dashb"/><path d="M4 9h10" stroke="#e02020" stroke-width="4"/></svg></button><button class="vb" aria-label="Toggle selection"><svg viewBox="0 0 18 18"><use href="#dashb"/><path d="M7 3v6M4 6h6" stroke="#6fa852" stroke-width="2"/><path d="M4 12h7" stroke="#e02020" stroke-width="2"/><use href="#cur"/></svg></button><i class="sep"></i>
          <button class="vb" aria-label="Select cells on"><svg viewBox="0 0 18 18"><use href="#dashb"/><use href="#tri"/><use href="#cur"/></svg></button><button class="vb" aria-label="Select points on"><svg viewBox="0 0 18 18"><use href="#dashb"/><use href="#tripts"/><use href="#cur"/></svg></button><button class="vb" aria-label="Select cells through"><svg viewBox="0 0 18 18"><path d="M2 5l7-4 8 3v6l-7 4-8-2z" fill="#8cc46c" stroke="#5b7a42"/><path d="M2 5l8 2 7-3" fill="none" stroke="#5b7a42"/><use href="#cur"/></svg></button><button class="vb" aria-label="Select points through"><svg viewBox="0 0 18 18"><path d="M2 5l6-3 8 2v8l-6 4-8-2zM2 5l8 2 6-3M10 7v9" fill="none" stroke="#d86a5a" stroke-dasharray="2 1"/><use href="#cur"/></svg></button><button class="vb" aria-label="Polygon cells"><svg viewBox="0 0 18 18"><path d="M2 3l9-1 5 3-3 11-9-1z" fill="none" stroke="#999" stroke-dasharray="2 2"/><path d="M5 9l6-4v8z" fill="#8cc46c" stroke="#5b7a42"/><use href="#cur"/></svg></button><button class="vb" aria-label="Polygon points"><svg viewBox="0 0 18 18"><g fill="#c0492f"><circle cx="4" cy="5" r="1.400"/><circle cx="9" cy="4" r="1.400"/><circle cx="14" cy="6" r="1.400"/><circle cx="7" cy="9" r="1.400"/><circle cx="12" cy="10" r="1.400"/><circle cx="5" cy="13" r="1.400"/><circle cx="10" cy="14" r="1.400"/></g><use href="#cur"/></svg></button><button class="vb" aria-label="Select block"><svg viewBox="0 0 18 18"><use href="#dashb"/><circle cx="5" cy="6" r="2.800" fill="#2a86b8"/><circle cx="5" cy="13" r="2.500" fill="#2a86b8"/><circle cx="12" cy="10" r="3" fill="#8cc46c"/><use href="#cur"/></svg></button><button class="vb" aria-label="Interactive block"><svg viewBox="0 0 18 18"><path d="M2 6l7-4h6v10l-6 5H2z" fill="#bdbdbd" stroke="#999"/><path d="M2 6h7v11M9 6l6-4" fill="none" stroke="#999"/><use href="#cur"/></svg></button><button class="vb" aria-label="Hover points"><svg viewBox="0 0 18 18"><circle cx="7" cy="8" r="2.500" fill="#ccc" stroke="#aaa"/><use href="#cur"/></svg></button><button class="vb" aria-label="Interactive cells"><svg viewBox="0 0 18 18"><use href="#tri"/><use href="#cur"/></svg></button><button class="vb" aria-label="Interactive points"><svg viewBox="0 0 18 18"><use href="#tripts"/><use href="#cur"/></svg></button><button class="vb" aria-label="Hover cells"><svg viewBox="0 0 18 18"><path d="M6 8l5 8H1z" fill="#a5d18c" stroke="#5b7a42"/><text class="q" x="9" y="12">?</text></svg></button><button class="vb" aria-label="Hover point"><svg viewBox="0 0 18 18"><circle cx="4" cy="14" r="2.500" fill="#dd4333"/><text class="q" x="8" y="12">?</text></svg></button><button class="vb" aria-label="Grow selection"><svg viewBox="0 0 18 18"><path d="M9 2v14M2 9h14" stroke="#a8a8a8" stroke-width="5"/></svg></button><button class="vb" aria-label="Shrink selection"><svg viewBox="0 0 18 18"><path d="M2 9h14" stroke="#a8a8a8" stroke-width="5"/></svg></button><button class="vb" aria-label="Clear selection"><svg viewBox="0 0 18 18"><circle cx="9" cy="9" r="7.500" fill="#ddd" stroke="#999" stroke-width="1.500"/><path d="M6 6l6 6M12 6l-6 6" stroke="#888" stroke-width="2"/></svg></button>
          <strong class="vname">RenderView1</strong>
          <button class="split-btn" aria-label="Split horizontal"><svg viewBox="0 0 18 18"><path d="M3 3h13v13H3zM9.500 3v13" fill="#cdd6ee" stroke="#999"/></svg></button><button class="split-btn" aria-label="Split vertical"><svg viewBox="0 0 18 18"><path d="M3 3h13v13H3zM3 9.500h13" fill="#cdd6ee" stroke="#999"/></svg></button><button class="split-btn" aria-label="Maximize"><svg viewBox="0 0 18 18"><rect x="1" y="1" width="16" height="16" fill="#eee" stroke="#333"/><path d="M.5.5h17v4H.5z" fill="#333"/></svg></button><button class="split-btn" aria-label="Close view"><svg><use href="#dockclose"/></svg></button>
        </div>
        <div class="view">
          <svg class="scene" viewBox="597 223 2238 1285" role="img" aria-label="Render view">
            <path d="M1260 1193L2168 858l185 64-1068.500 405z" fill="#b3afa4"/>
            <g fill="none" stroke="#e9e9ec">
              <path d="M1260 1193L1120 812 2070 494l174-1.500 109 430M2070 494l98 364"/>
              <path d="M1260 1193L2168 858l185 64" stroke-dasharray="4 1"/>
              <path d="M2353 922L1284.500 1327 1260 1193" stroke="#fff" stroke-width="2"/>
              <path d="M1131 803l4 11M1198 781l4 11M1263 758l4 11M1329 736l4 11M1394 714l4 11M1458 692l4 11M1521 671l4 11M1584 650l4 11M1646 629l4 11M1708 609l4 11M1768 588l4 11M1829 568l4 11M1888 548l4 11M1948 528l3 11M2006 509l3 11M2065 487l3 11M2147 487l4 12"/>
              <path d="M1117 821l10-4M1140 885l10-4M1163 948l10-4M1188 1011l10-4M1210 1074l10-4M1233 1134l10-4M1255 1195l10-4M1257 1216l12-4M1265 1257l12-4M1273 1304l12-4"/>
              <path d="M2242 499h6M2261 572h6M2279 644h6M2297 715h6M2315 784h6M2332 854h6M2190 870l11-4M2246 889l12-4M2310 912l12-4"/>
              <path d="M2283 946l4 5M2218 971l4 5M1949 1073l4 4M1881 1100l4 4M1810 1126l4 4M1739 1152l4 4M1668 1181l4 4M1595 1207l4 4M1522 1235l4 4M1448 1263l4 4M1373 1292l4 4M1297 1321l4 4" stroke="#fff" stroke-width="2"/>
            </g>
            <g class="lab">
              <text x="1130" y="791">6</text><text x="1197" y="769">5.5</text><text x="1263" y="747">5</text><text x="1328" y="725">4.5</text><text x="1392" y="703">4</text><text x="1456" y="682">3.5</text><text x="1520" y="661">3</text><text x="1582" y="640">2.5</text><text x="1644" y="619">2</text><text x="1707" y="598">1.5</text><text x="1767" y="577">1</text><text x="1827" y="558">0.5</text><text x="1887" y="537">0</text><text x="1946" y="518">-0.5</text><text x="2005" y="497">-1</text><text x="2063" y="478">-1.5</text><text x="1603" y="612">X Axis</text>
              <text x="2142" y="457">Z Axis</text><text x="2147" y="477">0</text>
              <text x="2257" y="499">3</text><text x="2280" y="572">2.5</text><text x="2293" y="644">2</text><text x="2316" y="715">1.5</text><text x="2344" y="715">Y Axis</text><text x="2329" y="784">1</text><text x="2352" y="853">0.5</text><text x="2364" y="922">0</text>
              <text x="2207" y="858">1</text><text x="2264" y="877">0</text><text x="2329" y="899">-1</text><text x="2295" y="870">Z Axis</text>
              <text x="2148" y="845">-1.5</text><text x="2097" y="866">-1</text><text x="2037" y="886">-0.5</text><text x="1987" y="907">0</text><text x="1924" y="928">0.5</text><text x="1872" y="949">1</text><text x="1809" y="971">1.5</text><text x="1755" y="993">2</text><text x="1690" y="1014">2.5</text><text x="1635" y="1036">3</text><text x="1570" y="1059">3.5</text><text x="1515" y="1081">4</text><text x="1447" y="1104">4.5</text><text x="1390" y="1127">5</text><text x="1322" y="1150">5.5</text><text x="1263" y="1173">6</text><text x="1696" y="990">X Axis</text>
              <text x="1110" y="820">3</text><text x="1128" y="885">2.5</text><text x="1157" y="948">2</text><text x="1176" y="1011">1.5</text><text x="1148" y="1014">Y Axis</text><text x="1203" y="1072">1</text><text x="1220" y="1134">0.5</text><text x="1247" y="1194">0</text>
            </g>
            <g class="lab front">
              <text x="2364" y="934">-1.5</text><text x="2294" y="959">-1</text><text x="2235" y="984">-0.5</text><text x="2161" y="1008">0</text><text x="2099" y="1034">0.5</text><text x="2027" y="1059">1</text><text x="1964" y="1085">1.5</text><text x="1889" y="1111">2</text><text x="1825" y="1138">2.5</text><text x="1749" y="1165">3</text><text x="1683" y="1192">3.5</text><text x="1605" y="1218">4</text><text x="1537" y="1247">4.5</text><text x="1459" y="1275">5</text><text x="1389" y="1303">5.5</text><text x="1309" y="1332">6</text><text x="1875" y="1141">X Axis</text>
              <text x="1251" y="1218">1</text><text x="1259" y="1260">0</text><text x="1265" y="1306">-1</text><text x="1228" y="1267">Z Axis</text>
            </g>
            <g class="triad">
              <path d="M757 1348L688 1373" stroke="#e01515"/><path d="M757 1348l-14-8" stroke="#20b020"/><circle cx="743" cy="1338" r="6.500" fill="#00ff00"/>
              <path d="M674 1378l14-13 4 13z" fill="#c40000"/><path d="M674 1378l14-13 1 6z" fill="#f00"/>
              <text x="702" y="1374">X</text><text x="753" y="1340">Z</text><text x="749" y="1281">Y</text>
              <path d="M757 1348l-20-68" stroke="#d8d800"/><path d="M731 1262l12 16-11 3z" fill="#c9c900"/><path d="M731 1262l5 18-4 1z" fill="#ff0"/>
            </g>
            <g class="legend">
              <rect x="2799" y="1081" width="16" height="32" fill="#fff"/><rect x="2799" y="1117" width="16" height="32" fill="#f00"/><rect x="2799" y="1153" width="16" height="31" fill="#0f0"/><rect x="2799" y="1188" width="16" height="32" fill="#00f"/><rect x="2799" y="1224" width="16" height="32" fill="#ff0"/><rect x="2799" y="1260" width="16" height="31" fill="#f0f"/><rect x="2799" y="1295" width="16" height="32" fill="#0ff"/><rect x="2799" y="1331" width="16" height="32" fill="#a1a1ff"/><rect x="2799" y="1367" width="16" height="31" fill="#a88053"/><rect x="2799" y="1402" width="16" height="32" fill="#ff80bc"/><rect x="2799" y="1438" width="16" height="32" fill="#8859b3"/><rect x="2799" y="1474" width="16" height="31" fill="#ffbf80"/>
              <path d="M2792 1097.500h8M2792 1132.500h8M2792 1168.500h8M2792 1204.500h8M2792 1239.500h8M2792 1275.500h8M2792 1311.500h8M2792 1346.500h8M2792 1382.500h8M2792 1418.500h8M2792 1453.500h8M2792 1489.500h8" stroke="#fff"/>
              <text x="2792" y="1101">0</text><text x="2792" y="1137">1</text><text x="2792" y="1173">2</text><text x="2792" y="1208">3</text><text x="2792" y="1244">4</text><text x="2792" y="1280">5</text><text x="2792" y="1315">6</text><text x="2792" y="1351">7</text><text x="2792" y="1387">8</text><text x="2792" y="1422">9</text><text x="2792" y="1458">10</text><text x="2792" y="1494">11</text>
              <text class="ltitle" transform="translate(2831 1291) rotate(-90)">vtkBlockColors</text>
            </g>
          </svg>
        </div>
      </div>
    </div>
  </div>
</div>
<svg class="notes" viewBox="0 0 2835 1510" preserveAspectRatio="none" aria-hidden="true">
  <g fill="none" stroke="#f00" stroke-width="2">
    <path d="M20 1023h653v228H20z"/>
    <path d="M885 595l292 201M794 797L672 984M1963 753l-27-48"/>
  </g>
  <path d="M1183 801l-10-3 6-9zM667 992l2-12 8 6zM1931 697l8 5-7 5z" fill="#f00" stroke="#f00"/>
  <text class="mark" x="2608" y="1496">CSDN @热爱生活的五柒</text>
</svg>
</body>
</html>
```
FILE: styles.css
```css
* { box-sizing: border-box; }
body {
  margin: 0;
  overflow: hidden;
  position: relative;
  background: #efefef;
  color: #000;
  font: 15px/20px "Noto Sans CJK SC", "Noto Sans", sans-serif;
}
button, input, select { font: inherit; color: inherit; margin: 0; padding: 0; }
button { border: 0; background: none; }
i { font-style: normal; }
.sprite { position: absolute; width: 0; height: 0; }

.app { display: flex; height: 100vh; }
.strip {
  flex: none;
  width: 7px;
  overflow: hidden;
  background: #141414;
  color: #7f8f9c;
  display: flex;
  flex-direction: column;
  align-items: flex-end;
}
.strip .s1 { margin-top: 176px; color: #4d7fa8; }
.strip .s2 { margin-top: 174px; color: #a88a62; }
.strip .s3 { margin-top: 32px; width: 7px; height: 27px; background: #2e2f35; }
.strip .s4 { margin-top: 32px; }
.strip .s5 { margin-top: auto; width: 7px; height: 8px; background: #005050; }
.window { flex: 1; min-width: 0; display: flex; flex-direction: column; }

.menubar {
  display: flex;
  gap: 15px;
  height: 21px;
  padding-left: 11px;
  line-height: 14px;
  border-bottom: 1px solid #d0d0d0;
}
.menubar a { color: inherit; text-decoration: none; white-space: nowrap; }
.menubar u { text-underline-offset: 2px; }

.toolbar {
  display: flex;
  align-items: center;
  height: 45px;
  background: linear-gradient(#fafafa, #eeeeee);
  border-bottom: 1px solid #b4b4b4;
}
.filters { height: 44px; }
.grip {
  flex: none;
  width: 19px;
  height: 18px;
  background: radial-gradient(circle, #b5b5b5 1px, transparent 1px) 6px 0 / 4px 4px repeat;
  background-clip: content-box;
  padding: 0 5px 0 8px;
}
.grip:first-child { width: 15px; padding: 0 3px 0 6px; }
.sep { flex: none; width: 7px; height: 26px; background: linear-gradient(#cfcfcf, #cfcfcf) 3px 0 / 1px 100% no-repeat; }
.tb {
  flex: none;
  width: 38px;
  height: 37px;
  display: flex;
  align-items: center;
  justify-content: center;
  border: 1px solid transparent;
  border-radius: 3px;
}
.filters .tb { width: 39px; }
.tb svg { width: 28px; height: 28px; overflow: visible; }
.tb.on { background: #dadada; border-color: #a8a8a8; }
.yv { --c: #f1bd19; --h: #dd4333; }
.zv { --c: #a5d18c; --h: #dd4333; --v: #f1bd19; }
.ital { font: italic bold 15px "Liberation Sans", sans-serif; fill: #222; }
.ax { font: bold 11px "Liberation Sans", sans-serif; fill: #7b7b7b; }
.q { font: bold 14px "Liberation Sans", sans-serif; fill: #6b7a42; }

.timelabel { padding-right: 4px; }
.timebox {
  width: 125px;
  height: 31px;
  padding: 0 3px;
  border: 1px solid #a8a8a8;
  border-radius: 2px;
  background: #fff;
}
.spin {
  display: flex;
  width: 40px;
  height: 30px;
  margin-left: 2px;
  border: 1px solid #b5b5b5;
  border-radius: 3px;
}
.spin input { width: 22px; border: 0; border-right: 1px solid #b5b5b5; background: #f1f1f1; color: #b9b9b9; padding-left: 5px; }
.arrows { flex: 1; background: linear-gradient(#ccc, #ccc) center 9px / 7px 3px no-repeat, linear-gradient(#ccc, #ccc) center 18px / 7px 3px no-repeat, #fafafa; }

.combo {
  position: relative;
  display: flex;
  align-items: center;
  height: 31px;
  border: 1px solid #a8a8a8;
  border-radius: 3px;
  background: linear-gradient(#fdfdfd, #ebebeb);
}
.combo::after {
  content: "";
  position: absolute;
  right: 9px;
  top: 12px;
  width: 10px;
  height: 6px;
  background: #555;
  clip-path: polygon(0 0, 100% 0, 50% 100%);
  pointer-events: none;
}
.combo select { appearance: none; flex: 1; min-width: 0; height: 29px; border: 0; background: none; padding-left: 4px; }
.array { width: 192px; padding-left: 6px; }
.cell { width: 18px; height: 18px; }
.comp { width: 82px; margin-left: 5px; border-color: #c9c9c9; }
.comp::after { background: #ccc; }
.repr { width: 164px; }

.main { flex: 1; min-height: 0; display: flex; }
.dock { flex: none; width: 586px; padding-right: 8px; display: flex; flex-direction: column; }
.docktitle { display: flex; align-items: center; height: 26px; padding: 0 2px 0 4px; gap: 2px; }
.docktitle span { flex: 1; }
.docktitle button { width: 12px; height: 12px; display: flex; }
.docktitle svg { width: 12px; height: 12px; }
.tree {
  flex: none;
  list-style: none;
  margin: 0;
  padding: 2px 0 0;
  height: 451px;
  background: #fff;
  border: 1px solid #b4b4b4;
}
.tree li { display: flex; align-items: center; height: 27px; }
.eye { width: 18px; height: 12px; margin: 0 27px 0 4px; }
.item { display: flex; align-items: center; height: 24px; padding: 0 4px 0 0; }
.item svg { width: 18px; height: 20px; margin-right: 6px; }
.sel { background: #308cc6; color: #fff; }
.split { height: 7px; background: radial-gradient(circle, #b5b5b5 1px, transparent 1px) center / 4px 4px no-repeat; }
.tabs { display: flex; align-items: flex-end; height: 37px; border-bottom: 1px solid #b4b4b4; }
.tab { height: 34px; padding: 0 15px; background: #dcdcdc; border: 1px solid #b4b4b4; border-bottom: 0; border-radius: 3px 3px 0 0; }
.tab.active { height: 36px; margin-bottom: -1px; background: #f5f5f5; border-right: 0; }
.props { height: 30px; }

.btn {
  display: flex;
  align-items: center;
  justify-content: center;
  gap: 5px;
  border: 1px solid #a8a8a8;
  border-radius: 3px;
  background: linear-gradient(#fdfdfd, #ececec);
}
.btn svg { width: 18px; height: 18px; }
.btn:disabled { color: #bebebe; border-color: #c4c4c4; }
.grey { filter: grayscale(1); opacity: .6; }
.actions { display: grid; grid-template-columns: repeat(4, 1fr); gap: 2px; align-items: center; padding: 6px 11px 0; }
.actions .btn { height: 31px; }
.actions .help { height: 28px; }
.search { display: flex; align-items: center; gap: 2px; padding: 6px 11px 8px; }
.search input { flex: 1; min-width: 0; height: 31px; padding: 0 3px; border: 1px solid #a8a8a8; border-radius: 3px; background: #fff; }
.search input::placeholder { color: #808080; opacity: 1; }
.search .btn { width: 28px; height: 28px; }

.scroll { flex: 1; min-height: 0; display: flex; padding: 0 11px; margin-bottom: 6px; overflow: hidden; }
.form { flex: 1; min-width: 0; display: flex; flex-direction: column; }
.group { display: flex; align-items: center; gap: 4px; height: 33px; flex: none; }
.gtitle { flex: 1; display: flex; align-items: center; gap: 8px; height: 33px; padding-left: 12px; border: 1px solid #b4b4b4; white-space: nowrap; }
.group .btn { width: 33px; height: 27px; }
.clipped { height: 10px; align-items: flex-end; overflow: hidden; }
.clipped .gtitle { flex: 1; padding-left: 34px; }
.clipped .btn { margin-bottom: 3px; }
.minus { width: 14px; height: 5px; background: #2a93c1; border: 1px solid #5f9fb8; }
.refresh { flex: none; align-self: flex-start; width: 80px; height: 32px; margin-top: 6px; }
.check { flex: none; display: flex; align-items: center; gap: 7px; height: 20px; margin-top: 9px; }
input[type=checkbox] {
  appearance: none;
  flex: none;
  width: 16px;
  height: 16px;
  background: #fff;
  border: 1px solid #b9b9b9;
}
input[type=checkbox]:checked::before {
  content: "";
  display: block;
  width: 12px;
  height: 12px;
  margin: 1px;
  background: #000;
  clip-path: polygon(0 50%, 20% 40%, 40% 70%, 75% 0, 100% 0, 50% 100%, 35% 100%);
}
.mixed { padding: 2px; }
.mixed::before { content: ""; display: block; width: 10px; height: 10px; background: #808080; border: 1px solid #333; }
.fields { flex: none; display: grid; grid-template-columns: 76px 1fr; column-gap: 4px; row-gap: 4px; align-items: center; margin-top: 8px; white-space: nowrap; }
.second { margin-top: 13px; }
.list { flex: none; margin-bottom: 4px; border: 1px solid #b4b4b4; background: #fff; }
.second + .list { margin-top: 8px; }
.list header { display: flex; align-items: center; height: 27px; background: linear-gradient(#f9f9f9, #e6e6e6); border-bottom: 1px solid #b4b4b4; }
.list header label { flex: 1; display: flex; align-items: center; gap: 6px; padding-left: 3px; }
.list header svg { width: 18px; height: 18px; margin-right: 1px; }
.rows { height: 20px; }
.regions { height: 161px; }
.regions label { display: flex; align-items: center; gap: 7px; height: 23px; padding-left: 3px; }
.zones { margin-top: 5px; margin-bottom: 12px; }
.rep { grid-template-columns: 107px 1fr; margin-top: 7px; }
.bar { flex: none; width: 17px; display: flex; flex-direction: column; border-left: 1px solid #b4b4b4; background: #fafafa; }
.bar i { display: block; border-bottom: 1px solid #b4b4b4; }
.up, .down { height: 17px; position: relative; }
.up::after, .down::after { content: ""; position: absolute; left: 4px; top: 6px; width: 9px; height: 5px; background: #444; clip-path: polygon(50% 0, 100% 100%, 0 100%); }
.down::after { clip-path: polygon(0 0, 100% 0, 50% 100%); }
.gap { height: 10px; background: #dedede; }
.thumb { flex: 308; }
.trough { flex: 363; background: #e3e3e3; }
.bar .down { border-bottom: 0; }

.right { flex: 1; min-width: 0; display: flex; flex-direction: column; border-left: 1px solid #b4b4b4; }
.ltabs { display: flex; align-items: flex-end; height: 38px; border-bottom: 1px solid #a8a8a8; }
.ltab { height: 34px; width: 38px; background: #e4e4e4; border: 1px solid #b4b4b4; border-bottom: 0; border-radius: 3px 3px 0 0; }
.ltab.active { display: flex; align-items: center; gap: 5px; width: auto; height: 36px; padding: 0 15px 0 13px; background: #fbfbfb; border-left: 0; }
.win { width: 16px; height: 16px; }
.x { width: 11px; height: 11px; }
.viewbar { display: flex; align-items: center; height: 27px; margin-right: -8px; }
.vb { flex: none; width: 26px; height: 24px; display: flex; align-items: center; justify-content: center; }
.vb svg { width: 17px; height: 17px; }
.faded { opacity: .6; }
.mode { font: bold 12px "Noto Sans CJK SC", sans-serif; color: #6d6a50; }
.vname { margin-left: auto; margin-right: 11px; line-height: 20px; border-bottom: 1px solid #000; }
.split-btn { flex: none; width: 25px; height: 25px; margin-right: 2px; display: flex; align-items: center; justify-content: center; border: 1px solid #b4b4b4; border-radius: 3px; background: #fafafa; }
.split-btn:last-child { margin-right: 0; }
.split-btn svg { width: 18px; height: 18px; }
.split-btn:last-child svg { width: 12px; height: 12px; }
.view { flex: 1; min-height: 0; border: solid #0000ff; border-width: 2px 0 0 2px; background: #52576e; display: flex; margin-bottom: 1px; }
.scene { width: 100%; height: 100%; display: block; }
.lab { font: 13px Lato, sans-serif; fill: #a0a1a6; text-anchor: middle; dominant-baseline: central; }
.front { fill: #d0cfca; }
.triad { font: 28px Lato, sans-serif; fill: #fff; text-anchor: middle; }
.legend { font: 18px Lato, sans-serif; fill: #f0f0f0; text-anchor: end; }
.ltitle { font-size: 17px; text-anchor: middle; }

.notes { position: absolute; inset: 0; width: 100%; height: 100%; pointer-events: none; }
.mark { font: 20px "Noto Sans CJK SC", sans-serif; fill: rgba(255, 255, 255, .7); text-shadow: 1px 1px 1px rgba(0, 0, 0, .5); }
```
